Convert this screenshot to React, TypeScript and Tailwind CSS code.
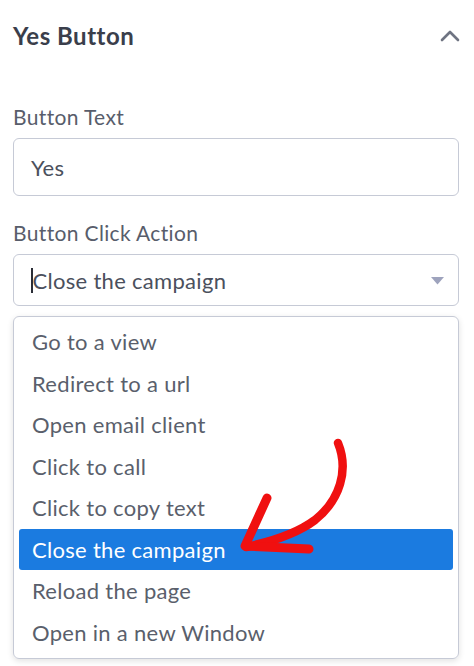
const options = [
  'Go to a view',
  'Redirect to a url',
  'Open email client',
  'Click to call',
  'Click to copy text',
  'Close the campaign',
  'Reload the page',
  'Open in a new Window',
];

const selected = 'Close the campaign';

export default function App() {
  return (
    <div className="relative w-[474px] h-[666px] overflow-hidden bg-white font-['Lato',sans-serif]">
      <div className="pl-[13px] pr-[15px] pt-[20px]">
        {/* section header */}
        <div className="flex items-center justify-between h-[32px]">
          <h2 className="text-[24px] font-bold text-[#3a3e4b] tracking-[0.5px]">Yes Button</h2>
          <svg width="20" height="12" viewBox="0 0 20 12" className="mr-[-1px] mt-[-1px]">
            <path d="M2 10 L10 2 L18 10" fill="none" stroke="#6f7482" strokeWidth="2.6" strokeLinecap="round" strokeLinejoin="round" />
          </svg>
        </div>

        <label className="block mt-[50px] text-[21px] leading-[30px] text-[#585d6b] tracking-[0.35px]">Button Text</label>
        <div className="mt-[6px] h-[58px] rounded-[6px] border-[1.5px] border-[#c6cad6] flex items-center pl-[17px] text-[22px] text-[#4b505d] tracking-[0.3px]">
          Yes
        </div>

        <label className="block mt-[22px] text-[21px] leading-[30px] text-[#585d6b] tracking-[0.35px]">Button Click Action</label>
        <div className="mt-[6px] h-[52px] rounded-[6px] border-[1.5px] border-[#c6cad6] flex items-center pl-[17px] pr-[14px]">
          <span className="w-[1.5px] h-[25px] bg-[#2a2d36]" />
          <span className="flex-1 text-[22px] text-[#4b505d] tracking-[0.3px]">{selected}</span>
          <svg width="13" height="8" viewBox="0 0 13 8" className="mt-[2px]">
            <path d="M0 0 H13 L6.5 7.5 Z" fill="#9ea3bd" />
          </svg>
        </div>

        {/* dropdown list */}
        <div className="mt-[10px] rounded-[6px] border-[1.5px] border-[#c6cad6] shadow-[0_2px_6px_rgba(0,0,0,0.12)] px-[5px] pt-[4px] pb-[5px]">
          {options.map((o) => (
            <div
              key={o}
              className={
                o === selected
                  ? 'h-[41.5px] flex items-center pl-[13px] rounded-[3px] bg-[#1b7be0] text-white text-[22px] tracking-[0.3px]'
                  : 'h-[41.5px] flex items-center pl-[13px] text-[#5a5f6c] text-[22px] tracking-[0.3px]'
              }
            >
              {o}
            </div>
          ))}
        </div>
      </div>

      {/* hand-drawn annotation arrow */}
      <svg className="absolute inset-0 pointer-events-none" width="474" height="666" viewBox="0 0 474 666">
        <g fill="none" stroke="#f01010" strokeLinecap="round" strokeLinejoin="round">
          <path d="M338 443 C 349 470, 340 500, 315 520 C 295 535, 270 542, 246 547" strokeWidth="8.5" />
          <path d="M267 498 L 245 546 L 309 549" strokeWidth="9" />
        </g>
      </svg>
    </div>
  );
}
